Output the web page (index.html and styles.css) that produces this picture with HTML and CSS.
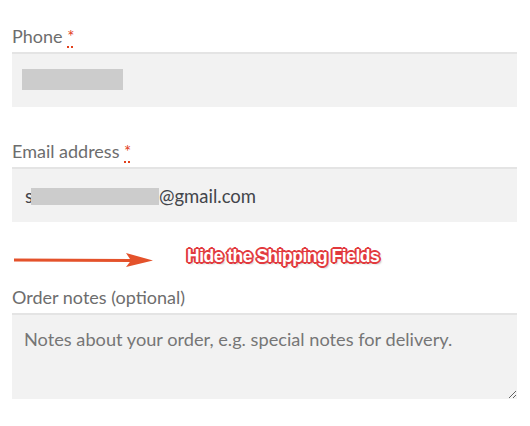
FILE: index.html
```html
<!DOCTYPE html>
<html>
<head>
<meta charset="utf-8">
<link rel="stylesheet" href="styles.css">
</head>
<body>
<form class="form">
  <div class="field field-phone">
    <label class="label">Phone <abbr class="req" title="required">*</abbr></label>
    <div class="input"><span class="redact redact-phone"></span></div>
  </div>
  <div class="field field-email">
    <label class="label">Email address <abbr class="req" title="required">*</abbr></label>
    <div class="input input-email"><span class="s">s</span><span class="redact redact-email"></span><span>@gmail.com</span></div>
  </div>
  <div class="note-row">
    <svg class="arrow" width="142" height="16" viewBox="0 0 142 16">
      <path d="M1 8 L118 8.5" stroke="#e4522b" stroke-width="3" fill="none"/>
      <path d="M113 1 L140 8.5 L113 15 L118 8.5 Z" fill="#e4522b"/>
    </svg>
    <span class="callout">Hide the Shipping Fields</span>
  </div>
  <div class="field field-notes">
    <label class="label">Order notes (optional)</label>
    <textarea class="textarea" placeholder="Notes about your order, e.g. special notes for delivery."></textarea>
  </div>
</form>
</body>
</html>
```
FILE: styles.css
```css
html, body {
  margin: 0;
  padding: 0;
  background: #fff;
}
.form {
  padding: 21px 13px 0 12px;
  font-family: Lato, "Open Sans", sans-serif;
}
.field {
  display: flex;
  flex-direction: column;
}
.label {
  font-size: 18px;
  line-height: 31px;
  color: #6d6d6d;
}
.req {
  color: #e2401c;
  font-size: 17px;
  text-decoration: underline dotted #e2401c;
  text-decoration-thickness: 2px;
  text-underline-offset: 3px;
}
.input {
  box-sizing: border-box;
  height: 55px;
  background: #f2f2f2;
  border-top: 2px solid #e4e4e4;
  display: flex;
  align-items: center;
  padding-left: 10px;
  font-size: 18.5px;
  color: #43454b;
}
.redact {
  display: inline-block;
  background: #cccccc;
}
.redact-phone {
  width: 101px;
  height: 21px;
  margin-top: -2px;
}
.field-email {
  margin-top: 29px;
}
.input-email {
  padding-left: 13px;
}
.redact-email {
  width: 128px;
  height: 17px;
  margin-left: -2px;
  margin-top: 2px;
}
.note-row {
  display: flex;
  align-items: center;
  height: 44px;
  margin-top: 16px;
}
.arrow {
  margin-left: 1px;
}
.callout {
  margin-left: 32px;
  font-family: "Liberation Sans", Arial, sans-serif;
  font-weight: bold;
  font-size: 17.5px;
  color: #fff;
  letter-spacing: -0.5px;
  text-shadow:
    -2px 0 #e23a3e, 2px 0 #e23a3e, 0 -2px #e23a3e, 0 2px #e23a3e,
    -1.4px -1.4px #e23a3e, 1.4px 1.4px #e23a3e, -1.4px 1.4px #e23a3e, 1.4px -1.4px #e23a3e,
    2px 2px 2px rgba(0,0,0,0.3);
  margin-top: -8px;
}
.textarea {
  box-sizing: border-box;
  height: 86px;
  width: 100%;
  margin: 0;
  background: #f2f2f2;
  border: 0;
  border-top: 2px solid #e4e4e4;
  padding: 11px 12px;
  font-family: Lato, "Open Sans", sans-serif;
  font-size: 18.2px;
  line-height: 1.5;
  color: #43454b;
  outline: none;
}
.textarea::placeholder {
  color: #767676;
}
```
